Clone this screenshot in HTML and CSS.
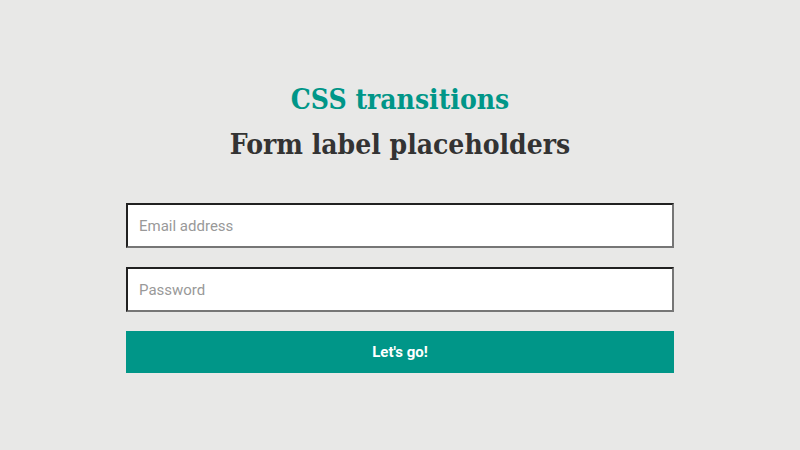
FILE: index.html
```html
<!DOCTYPE html>
<html lang="en">
<head>
    <meta charset="UTF-8">
    <meta name="viewport" content="width=device-width, initial-scale=1.0">
    <title>CSS transitions - Form label placeholders</title>
    <link rel="stylesheet" href="styles.css">
</head>
<body>
    <div class="container">
        <div class="header">
            <h2>CSS transitions</h2>
            <h1>Form label placeholders</h1>
        </div>

        <form class="login" onsubmit="return false">
            <div class="input-group">
                <input type="email" id="email" placeholder="Email address">
            </div>
            <div class="input-group">
                <input type="password" id="password" placeholder="Password">
            </div>
            <button type="submit">Let's go!</button>
        </form>
    </div>
</body>
</html>
```

FILE: styles.css
```css
body { font-family: Roboto, "Liberation Sans", Arial, sans-serif; margin: 0; background-color: #e8e8e7; color: #333; }
.container { width: 548px; margin: 0 auto; padding-top: 82px; }
.header { text-align: center; margin-bottom: 36px; }
h1, h2 { font-family: "DejaVu Serif", "Liberation Serif", serif; font-weight: bold; margin: 0; font-stretch: condensed; }
h2 { color: #009688; font-size: 28px; line-height: 36px; }
h1 { color: #333; font-size: 28px; line-height: 44px; margin-top: 5px; }
.input-group { margin-bottom: 19px; }
input { display: block; width: 100%; height: 45px; padding: 0 11px; border: 2px inset #767676; background: #fff; font-family: inherit; font-size: 15px; color: #333; box-sizing: border-box; outline: none; }
input::placeholder { color: #999; }
button { display: block; width: 100%; height: 42px; background-color: #009688; color: #fff; border: none; font-family: inherit; font-size: 15px; font-weight: 700; cursor: pointer; }
```
